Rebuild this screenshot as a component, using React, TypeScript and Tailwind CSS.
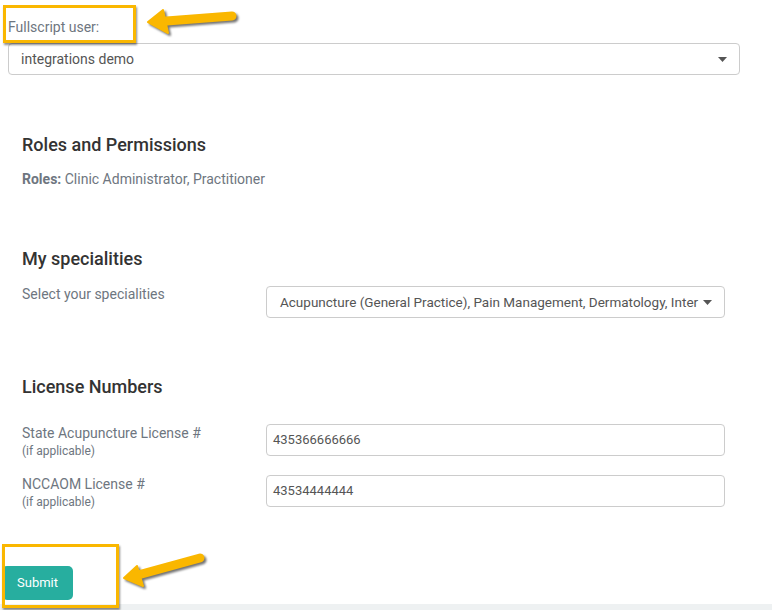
import React from 'react'

function Caret() {
  return (
    <svg width="9" height="5" viewBox="0 0 9 5" className="shrink-0">
      <path d="M0 0 L9 0 L4.5 5 Z" fill="#555" />
    </svg>
  )
}

function LicenseRow({ label, value }: { label: string; value: string }) {
  return (
    <div className="flex">
      <div className="w-[244px] shrink-0">
        <div className="text-[14px] leading-[20px] text-[#6e7680]">{label}</div>
        <div className="text-[12px] leading-[16px] text-[#6e7680]">(if applicable)</div>
      </div>
      <div className="w-[459px] h-[32px] mt-[1px] border border-[#ccc] rounded-[4px] flex items-center px-[6px] text-[13px] text-[#555]">
        {value}
      </div>
    </div>
  )
}

export default function App() {
  return (
    <div className="relative w-[772px] h-[610px] overflow-hidden bg-white font-['Roboto',sans-serif]">
      {/* fullscript user */}
      <div className="px-[8px] pt-[17px]">
        <div className="text-[14px] leading-[20px] text-[#6e7680] mb-[6px]">Fullscript user:</div>
        <div className="w-[732px] h-[32px] border border-[#ccc] rounded-[4px] flex items-center justify-between pl-[12px] pr-[12px] text-[14px] text-[#555]">
          <span>integrations demo</span>
          <Caret />
        </div>
      </div>

      <div className="px-[22px]">
        <h2 className="mt-[58px] text-[18px] leading-[24px] font-medium text-[#333]">Roles and Permissions</h2>
        <p className="mt-[12px] text-[14px] leading-[20px] text-[#6e7680]">
          <span className="font-bold">Roles:</span> Clinic Administrator, Practitioner
        </p>

        <h2 className="mt-[58px] text-[18px] leading-[24px] font-medium text-[#333]">My specialities</h2>
        <div className="mt-[13px] flex">
          <div className="w-[244px] shrink-0 text-[14px] leading-[20px] text-[#6e7680]">Select your specialities</div>
          <div className="w-[459px] h-[32px] mt-[2px] border border-[#ccc] rounded-[4px] flex items-center justify-between pl-[13px] pr-[12px] text-[13.5px] text-[#555]">
            <span className="whitespace-nowrap">Acupuncture (General Practice), Pain Management, Dermatology, Inter</span>
            <span className="ml-[4px]"><Caret /></span>
          </div>
        </div>

        <h2 className="mt-[57px] text-[18px] leading-[24px] font-medium text-[#333]">License Numbers</h2>
        <div className="mt-[24px] flex flex-col gap-[15px]">
          <LicenseRow label="State Acupuncture License #" value="435366666666" />
          <LicenseRow label="NCCAOM License #" value="43534444444" />
        </div>
      </div>

      <div className="pl-[2px] mt-[56px]">
        <button className="w-[71px] h-[34px] rounded-[5px] bg-[#27ae9f] text-white text-[13px]">Submit</button>
      </div>

      <div className="absolute left-0 right-0 bottom-0 h-[6px] bg-[#eef1f2]" />

      {/* annotations */}
      <div className="absolute left-[3px] top-[5px] w-[133px] h-[38px] border-[3px] border-[#fab700] shadow-[1px_2px_2px_rgba(0,0,0,0.45)]" />
      <div className="absolute left-[2px] top-[544px] w-[117px] h-[64px] border-[3px] border-[#fab700] shadow-[1px_2px_2px_rgba(0,0,0,0.45)]" />
      <svg className="absolute inset-0 pointer-events-none drop-shadow-[2px_2px_1px_rgba(0,0,0,0.55)]" width="772" height="610">
        <line x1="160" y1="21.5" x2="232" y2="16" stroke="#fab700" strokeWidth="9" strokeLinecap="round" />
        <polygon points="148,22 163,10 168,33" fill="#fab700" strokeLinejoin="round" stroke="#fab700" strokeWidth="2" />
        <line x1="138" y1="575" x2="200" y2="558" stroke="#fab700" strokeWidth="9" strokeLinecap="round" />
        <polygon points="124,578 137,566 143,586" fill="#fab700" strokeLinejoin="round" stroke="#fab700" strokeWidth="2" />
      </svg>
    </div>
  )
}
